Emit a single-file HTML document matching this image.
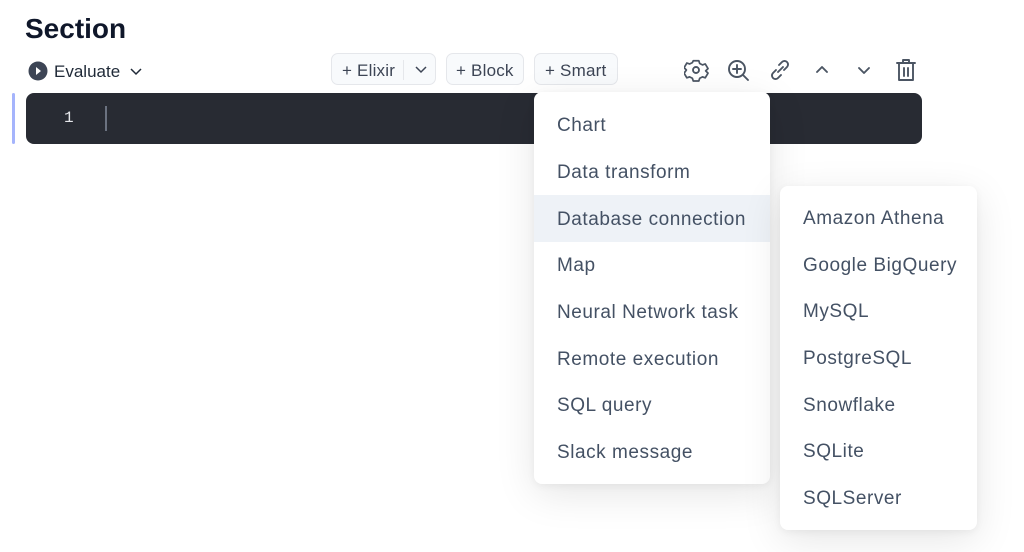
<!DOCTYPE html>
<html><head><style>
body{margin:0;width:1024px;height:552px;background:#fff;font-family:"Liberation Sans",sans-serif;position:relative;overflow:hidden;color:#445164}
.abs{position:absolute}
.btn{position:absolute;top:53px;height:32px;border:1px solid #e5e7eb;border-radius:7px;background:#f8fafc;font-size:17px;color:#3d4555;line-height:33px;box-sizing:border-box;letter-spacing:0.2px}
.menu{position:absolute;background:#fff;border-radius:8px;box-shadow:0 10px 40px rgba(0,0,0,.10),0 2px 8px rgba(0,0,0,.05)}
.it{position:absolute;left:0;right:0;height:47px;line-height:49px;font-size:19px;padding-left:23px;box-sizing:border-box;letter-spacing:0.55px}
</style></head><body>
<div class="abs" style="left:25px;top:13px;font-size:28px;font-weight:bold;color:#0f172a">Section</div>
<svg class="abs" style="left:28px;top:61px" width="20" height="20"><circle cx="10" cy="10" r="9.5" fill="#3d4555"/><path d="M8 6l5 4-5 4z" fill="#fff"/></svg>
<div class="abs" style="left:54px;top:62px;font-size:17px;color:#1f2937">Evaluate</div>
<svg class="abs" style="left:129px;top:64px" width="14" height="14"><path d="M2 5l5 5 5-5" stroke="#1f2937" stroke-width="1.5" fill="none"/></svg>
<div class="btn" style="left:331px;width:105px;padding-left:10px">+ Elixir<span style="position:absolute;left:71px;top:6px;height:20px;border-left:1px solid #e5e7eb"></span><svg style="position:absolute;left:82px;top:10px" width="14" height="12"><path d="M2 3l5 5 5-5" stroke="#3d4555" stroke-width="1.5" fill="none"/></svg></div>
<div class="btn" style="left:446px;width:78px;padding-left:9px">+ Block</div>
<div class="btn" style="left:534px;width:84px;padding-left:10px">+ Smart</div>
<svg class="abs" style="left:684px;top:58px" width="236" height="26" fill="none" stroke="#4b5563" stroke-width="1.9" stroke-linecap="round" stroke-linejoin="round">
<path d="M9 3h6l1 3 3 1.5 3-1 3 5-2.5 2.5 2.5 2.5-3 5-3-1-3 1.5-1 3H9l-1-3-3-1.5-3 1-3-5L1.5 13 -1 10.5l3-5 3 1L8 5z" transform="translate(1,0) scale(0.92)"/><circle cx="12" cy="12" r="3"/>
<g transform="translate(42,0)"><circle cx="11" cy="11" r="8"/><path d="M11 7v8M7 11h8M17 17l5 5"/></g>
<g transform="translate(84,0)"><path d="M10 14l5-5M8 12l-3 3a3.5 3.5 0 0 0 5 5l3-3M16 12l3-3a3.5 3.5 0 0 0-5-5l-3 3"/></g>
<g transform="translate(126,0)"><path d="M7 14l5-5 5 5"/></g>
<g transform="translate(168,0)"><path d="M7 10l5 5 5-5"/></g>
<g transform="translate(210,0)"><path d="M3 5h18M9 5V2h6v3M5 5v17h14V5M10 10v8M14 10v8"/></g>
</svg>
<div class="abs" style="left:12px;top:93px;width:3px;height:51px;background:#a5b4fc;border-radius:2px"></div>
<div class="abs" style="left:26px;top:93px;width:896px;height:51px;background:#282b33;border-radius:8px"></div>
<div class="abs" style="left:64px;top:109px;font-family:'Liberation Mono',monospace;font-size:16px;color:#e5e7eb">1</div>
<div class="abs" style="left:105px;top:106px;width:2px;height:25px;background:#6b7280"></div>
<div class="menu" style="left:534px;top:92px;width:236px;height:392px">
<div class="it" style="top:9px">Chart</div>
<div class="it" style="top:56px">Data transform</div>
<div class="it" style="top:103px;background:#eef2f7">Database connection</div>
<div class="it" style="top:149px">Map</div>
<div class="it" style="top:196px">Neural Network task</div>
<div class="it" style="top:243px">Remote execution</div>
<div class="it" style="top:289px">SQL query</div>
<div class="it" style="top:336px">Slack message</div>
</div>
<div class="menu" style="left:780px;top:186px;width:197px;height:344px">
<div class="it" style="top:8px">Amazon Athena</div>
<div class="it" style="top:55px">Google BigQuery</div>
<div class="it" style="top:101px">MySQL</div>
<div class="it" style="top:148px">PostgreSQL</div>
<div class="it" style="top:195px">Snowflake</div>
<div class="it" style="top:241px">SQLite</div>
<div class="it" style="top:288px">SQLServer</div>
</div>
</body></html>
